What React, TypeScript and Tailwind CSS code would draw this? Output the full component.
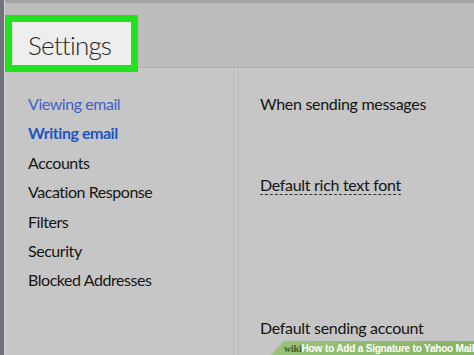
const nav = [
  { label: "Viewing email", cls: "text-[#3d63c6]" },
  { label: "Writing email", cls: "text-[#1d55c9] font-bold" },
  { label: "Accounts", cls: "text-[#161616]" },
  { label: "Vacation Response", cls: "text-[#161616]" },
  { label: "Filters", cls: "text-[#161616]" },
  { label: "Security", cls: "text-[#161616]" },
  { label: "Blocked Addresses", cls: "text-[#161616]" },
];

export default function App() {
  return (
    <div
      className="relative w-[474px] h-[355px] overflow-hidden flex bg-[#c6c6c6]"
      style={{ fontFamily: 'Lato, "Open Sans", sans-serif' }}
    >
      {/* window edge */}
      <div className="w-[4px] h-full bg-[#6f727a]" />
      <div className="w-[1px] h-full bg-[#d2d2d2]" />

      <div className="flex-1 flex flex-col">
        <div className="h-[3px] bg-[#a4a4a4]" />

        {/* header */}
        <div className="h-[65px] bg-[#bcbcbc] border-b border-[#b0b0b0] relative z-10">
          <div className="mt-[12px] w-[133px] h-[57px] border-[7px] border-[#22e21b] bg-[#eeeeee] flex items-center pl-[16px]">
            <span className="text-[26px] leading-none font-light text-[#262626] tracking-[-0.8px] mt-[2px]">
              Settings
            </span>
          </div>
        </div>

        {/* body */}
        <div className="flex-1 flex">
          <div className="w-[229px] pt-[21px] pl-[23px] flex flex-col">
            {nav.map((n) => (
              <div key={n.label} className={`h-[29.4px] text-[16px] leading-[29px] tracking-[-0.45px] ${n.cls}`}>
                {n.label}
              </div>
            ))}
          </div>

          <div className="w-[4px] flex">
            <div className="w-[1px] bg-[#bcbcbc]" />
            <div className="w-[2px] bg-[#cdcdcd]" />
            <div className="w-[1px] bg-[#bcbcbc]" />
          </div>

          <div className="flex-1 pl-[22px] pt-[21px] flex flex-col text-[16px] tracking-[-0.3px] text-[#141414]">
            <div className="leading-[29px]">When sending messages</div>
            <div className="mt-[52px] leading-[29px]">
              <span className="border-b border-dashed border-[#333]">Default rich text font</span>
            </div>
            <div className="mt-[114px] leading-[29px]">Default sending account</div>
          </div>
        </div>
      </div>

      {/* watermark */}
      <div
        className="absolute right-0 bottom-0 h-[14px] w-[203px] bg-gradient-to-r from-[#9ac27a] to-[#86b464] flex items-center pl-[13px] text-[10px] font-bold text-white whitespace-nowrap tracking-[-0.2px]"
        style={{ clipPath: "polygon(13px 0, 100% 0, 100% 100%, 0 100%)", fontFamily: '"Liberation Sans", Arial, sans-serif' }}
      >
        <span className="text-[#3c5f2a]" style={{ fontFamily: '"Liberation Serif", serif' }}>wiki</span>
        <span>How</span>
        <span className="ml-[3px]">to Add a Signature to Yahoo Mail</span>
      </div>
    </div>
  );
}
